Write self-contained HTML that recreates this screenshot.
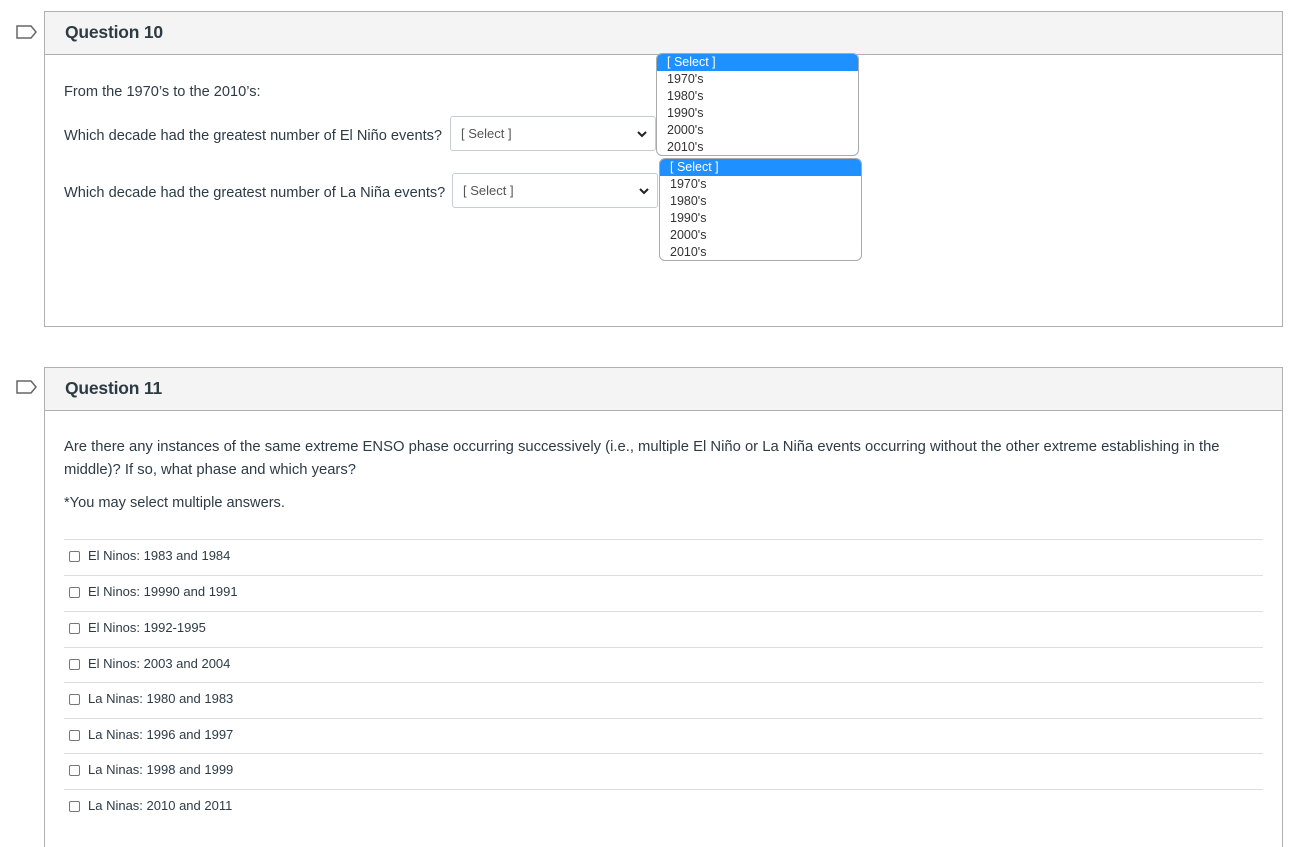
<!DOCTYPE html>
<html><head><meta charset="utf-8"><style>
*{box-sizing:border-box;margin:0;padding:0}
html,body{width:1305px;height:847px;overflow:hidden}
body{background:#fff;position:relative;font-family:"Liberation Sans",sans-serif;color:#2d3b45;font-size:14.6px}
.a{position:absolute;white-space:nowrap}
.box{position:absolute;left:44px;width:1239px;border:1px solid #b0b0b0}
.hd{position:absolute;left:0;top:0;right:0;height:43px;background:#f4f4f4;border-bottom:1px solid #b0b0b0}
.hd span{position:absolute;left:20px;top:10px;font-size:17.5px;font-weight:bold;color:#2d3b45;letter-spacing:-0.2px}
.sel{position:absolute;height:35px;border:1px solid #c7cdd1;border-radius:3px;background:#fff;font-size:13px;color:#555}
.sel span{position:absolute;left:10px;top:9px}
.sel svg{position:absolute;right:8px;top:13px}
.dd{position:absolute;width:203px;height:103px;border:1px solid #aaa;border-radius:6px;background:#fff;font-size:12.5px;line-height:17px;overflow:hidden;color:#333}
.dd div{padding-left:10px}
.dd .h{background:#1e90ff;color:#fff}
.row{position:absolute;left:64px;width:1199px;border-top:1px solid #dcdfe2;height:36px;font-size:13px}
.row i{position:absolute;left:5px;top:11px;width:11px;height:11px;border:1px solid #777;border-radius:2px}
.row span{position:absolute;left:24px;top:8px}
.flag{position:absolute;left:16px;width:21px;height:14px}
</style></head><body>
<svg class="flag" style="top:25px" viewBox="0 0 21 14"><path d="M1 1H15L20 7L15 13H1Z" fill="none" stroke="#666" stroke-width="1.5"/></svg>
<svg class="flag" style="top:380px" viewBox="0 0 21 14"><path d="M1 1H15L20 7L15 13H1Z" fill="none" stroke="#666" stroke-width="1.5"/></svg>

<div class="box" style="top:11px;height:316px"><div class="hd"><span>Question 10</span></div></div>
<div class="a" style="left:64px;top:84px">From the 1970’s to the 2010’s:</div>
<div class="a" style="left:64px;top:128px">Which decade had the greatest number of El Niño events?</div>
<div class="a" style="left:64px;top:185px">Which decade had the greatest number of La Niña events?</div>
<div class="sel" style="left:450px;top:116px;width:206px"><span>[ Select ]</span><svg width="10" height="8" viewBox="0 0 10 8"><path d="M1 2L5 6L9 2" fill="none" stroke="#222" stroke-width="2"/></svg></div>
<div class="sel" style="left:452px;top:173px;width:206px"><span>[ Select ]</span><svg width="10" height="8" viewBox="0 0 10 8"><path d="M1 2L5 6L9 2" fill="none" stroke="#222" stroke-width="2"/></svg></div>
<div class="dd" style="left:656px;top:53px"><div class="h">[ Select ]</div><div>1970's</div><div>1980's</div><div>1990's</div><div>2000's</div><div>2010's</div></div>
<div class="dd" style="left:659px;top:158px"><div class="h">[ Select ]</div><div>1970's</div><div>1980's</div><div>1990's</div><div>2000's</div><div>2010's</div></div>

<div class="box" style="top:367px;height:480px;border-bottom:none"><div class="hd"><span>Question 11</span></div></div>
<div class="a" style="left:64px;top:439px;font-size:14.8px">Are there any instances of the same extreme ENSO phase occurring successively (i.e., multiple El Niño or La Niña events occurring without the other extreme establishing in the</div>
<div class="a" style="left:64px;top:462px;font-size:14.8px">middle)? If so, what phase and which years?</div>
<div class="a" style="left:64px;top:495px">*You may select multiple answers.</div>
<div class="row" style="top:539px"><i></i><span>El Ninos: 1983 and 1984</span></div>
<div class="row" style="top:575px"><i></i><span>El Ninos: 19990 and 1991</span></div>
<div class="row" style="top:611px"><i></i><span>El Ninos: 1992-1995</span></div>
<div class="row" style="top:647px"><i></i><span>El Ninos: 2003 and 2004</span></div>
<div class="row" style="top:682px"><i></i><span>La Ninas: 1980 and 1983</span></div>
<div class="row" style="top:718px"><i></i><span>La Ninas: 1996 and 1997</span></div>
<div class="row" style="top:753px"><i></i><span>La Ninas: 1998 and 1999</span></div>
<div class="row" style="top:789px;height:30px"><i></i><span>La Ninas: 2010 and 2011</span></div>
</body></html>
